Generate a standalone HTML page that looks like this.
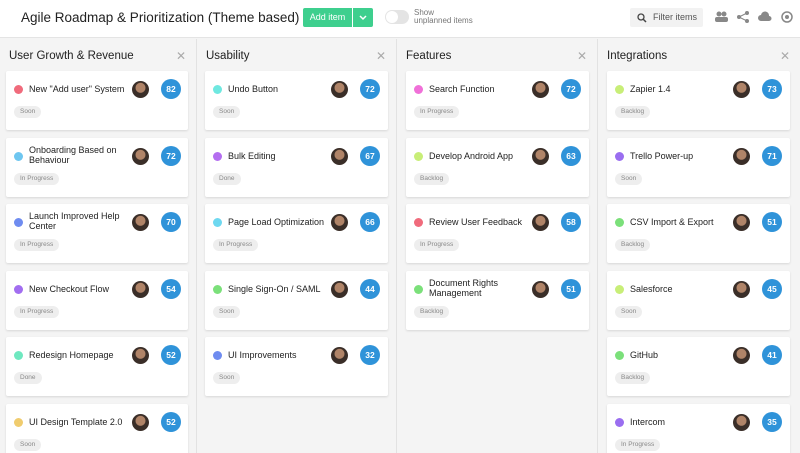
<!DOCTYPE html><html><head><style>
*{box-sizing:border-box;margin:0;padding:0}
html,body{width:800px;height:453px;overflow:hidden}
body{font-family:"Liberation Sans",sans-serif;background:#f4f4f4;position:relative}
.hdr{position:absolute;left:0;top:0;width:800px;height:38px;background:#fff;border-bottom:1px solid #e4e4e4}
.title{position:absolute;left:21px;top:10px;font-size:13.5px;color:#222}
.add{position:absolute;left:303px;top:8px;width:49px;height:19px;background:#3ecf8e;color:#fff;font-size:9px;line-height:19px;text-align:center;border-radius:2px 0 0 2px}
.dd{position:absolute;left:353px;top:8px;width:20px;height:19px;background:#3ecf8e;border-radius:0 2px 2px 0}
.tog{position:absolute;left:385px;top:10px;width:24px;height:14px;border-radius:7px;background:#e4e4e4}
.tog:after{content:"";position:absolute;left:1px;top:1px;width:12px;height:12px;border-radius:6px;background:#fff}
.show{position:absolute;left:414px;top:9px;font-size:8px;color:#777;line-height:8px}
.filt{position:absolute;left:630px;top:8px;width:73px;height:19px;background:#f2f2f2;border-radius:2px;font-size:9px;color:#555;line-height:19px;padding-left:23px}
.col{position:absolute;top:39px;height:414px;border-right:1px solid #e2e2e2;background:#f4f4f4}
.ch{position:absolute;left:9px;top:11px;font-size:11.5px;color:#222}
.x{position:absolute;right:10px;top:10px;font-size:12px;color:#aaa}
.card{position:absolute;height:59px;background:#fff;border-radius:2px;box-shadow:0 1px 2px rgba(0,0,0,.12)}
.dot{position:absolute;left:8px;top:14px;width:9px;height:9px;border-radius:50%}
.nm{position:absolute;left:23px;top:13px;font-size:9px;color:#222;width:100px;line-height:10px}
.nm.two{top:7px}
.av{position:absolute;left:126px;top:10px;width:17px;height:17px;border-radius:50%;background:radial-gradient(circle at 50% 40%,#b08468 0 35%,#3a2e28 40%)}
.sc{position:absolute;left:155px;top:8px;width:20px;height:20px;border-radius:50%;background:#2f93d9;color:#fff;font-size:8.5px;font-weight:bold;text-align:center;line-height:20px}
.tag{position:absolute;left:8px;top:35px;height:12px;padding:0 6px;background:#eee;border-radius:6px;font-size:6.5px;color:#888;line-height:12px}
</style></head><body>
<div class="hdr">
<div class="title">Agile Roadmap &amp; Prioritization (Theme based)</div>
<div class="add">Add item</div><div class="dd"><svg width="20" height="19"><path d="M7 8l3 3 3-3" stroke="#fff" stroke-width="1.5" fill="none"/></svg></div>
<div class="tog"></div><div class="show">Show<br>unplanned items</div>
<div class="filt"><svg style="position:absolute;left:7px;top:5px" width="10" height="10"><circle cx="4" cy="4" r="3" stroke="#444" stroke-width="1.3" fill="none"/><path d="M6 6l3 3" stroke="#444" stroke-width="1.5"/></svg>Filter items</div>
<svg style="position:absolute;left:714px;top:10px" width="80" height="14" fill="#888"><circle cx="5" cy="4" r="2.5"/><circle cx="10" cy="4" r="2.5"/><rect x="1" y="7" width="13" height="5" rx="2"/><circle cx="25" cy="7" r="2"/><circle cx="33" cy="3" r="2"/><circle cx="33" cy="11" r="2"/><path d="M25 7L33 3M25 7L33 11" stroke="#888"/><path d="M47 11a3 3 0 0 1 0-6a4 4 0 0 1 8 1a2.5 2.5 0 0 1 0 5z"/><circle cx="73" cy="7" r="5" fill="none" stroke="#888" stroke-width="1.5"/><circle cx="73" cy="7" r="2"/></svg>
</div>
<div class="col" style="left:0;width:197px"><div class="ch">User Growth &amp; Revenue</div><div class="x">✕</div></div>
<div class="col" style="left:197px;width:200px"><div class="ch">Usability</div><div class="x">✕</div></div>
<div class="col" style="left:397px;width:201px"><div class="ch">Features</div><div class="x">✕</div></div>
<div class="col" style="left:598px;width:202px;border:none"><div class="ch">Integrations</div><div class="x">✕</div></div>
<div id="cards"></div>
<script>
const cols=[6,205,406,607];
const data=[
[["#f06b7c","New \"Add user\" System",82,"Soon"],["#6ec6f0","Onboarding Based on Behaviour",72,"In Progress"],["#6f8cf0","Launch Improved Help Center",70,"In Progress"],["#a26ef0","New Checkout Flow",54,"In Progress"],["#6fe8c0","Redesign Homepage",52,"Done"],["#f0cc6e","UI Design Template 2.0",52,"Soon"]],
[["#6fe8e0","Undo Button",72,"Soon"],["#b46ef0","Bulk Editing",67,"Done"],["#6ed8f0","Page Load Optimization",66,"In Progress"],["#7be07a","Single Sign-On / SAML",44,"Soon"],["#6f8cf0","UI Improvements",32,"Soon"]],
[["#f070d8","Search Function",72,"In Progress"],["#c8ee78","Develop Android App",63,"Backlog"],["#f06b7c","Review User Feedback",58,"In Progress"],["#7be07a","Document Rights Management",51,"Backlog"]],
[["#c8ee78","Zapier 1.4",73,"Backlog"],["#9a6ef0","Trello Power-up",71,"Soon"],["#7be07a","CSV Import & Export",51,"Backlog"],["#c8ee78","Salesforce",45,"Soon"],["#7be07a","GitHub",41,"Backlog"],["#9a6ef0","Intercom",35,"In Progress"]]];
let h="";
data.forEach((c,i)=>c.forEach((d,j)=>{const two=d[1].length>22;
h+=`<div class="card" style="left:${cols[i]}px;top:${71+j*66.5}px;width:${i==0?182:183}px"><div class="dot" style="background:${d[0]}"></div><div class="nm${two?' two':''}">${d[1].replace('&','&amp;')}</div><div class="av"></div><div class="sc">${d[2]}</div><div class="tag">${d[3]}</div></div>`}));
document.getElementById("cards").innerHTML=h;
</script>
</body></html>
